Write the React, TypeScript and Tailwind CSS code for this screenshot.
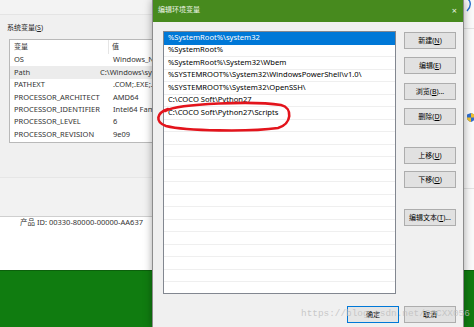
import React from 'react';

const ui = "font-['Noto_Sans','Noto_Sans_CJK_SC',sans-serif]";

const sysVars = [
  ['OS', 'Windows_NT'],
  ['Path', 'C:\\Windows\\system32'],
  ['PATHEXT', '.COM;.EXE;.BAT'],
  ['PROCESSOR_ARCHITECT', 'AMD64'],
  ['PROCESSOR_IDENTIFIER', 'Intel64 Family 6'],
  ['PROCESSOR_LEVEL', '6'],
  ['PROCESSOR_REVISION', '9e09'],
];

const paths = [
  '%SystemRoot%\\system32',
  '%SystemRoot%',
  '%SystemRoot%\\System32\\Wbem',
  '%SYSTEMROOT%\\System32\\WindowsPowerShell\\v1.0\\',
  '%SYSTEMROOT%\\System32\\OpenSSH\\',
  'C:\\COCO Soft\\Python27',
  'C:\\COCO Soft\\Python27\\Scripts',
];

function Btn({ label, hot, rest = '', focus = false, className = '' }: { label: string; hot: string; rest?: string; focus?: boolean; className?: string }) {
  return (
    <div
      className={`h-[17px] w-[52px] flex items-center justify-center border text-[7px] leading-none text-black ${
        focus ? 'border-[#0078d7] bg-[#e5e5e5]' : 'border-[#adadad] bg-[#e1e1e1]'
      } ${className}`}
    >
      {label}
      {hot && (
        <>
          (<span className="underline">{hot}</span>)
        </>
      )}
      {rest}
    </div>
  );
}

export default function App() {
  const empty = Array.from({ length: 14 });

  return (
    <div className={`relative w-[474px] h-[327px] overflow-hidden flex bg-white ${ui}`}>
      {/* environment variables window (behind) */}
      <div className="w-[152px] shrink-0 flex flex-col overflow-hidden">
        <div className="h-[217px] bg-[#f0f0f0] border-b border-[#cfcfcf] flex flex-col">
          <div className="h-[15px] border-b border-[#e4e4e4] bg-[#f3f3f3]" />
          <div className="pl-[7px] pt-[9px] text-[7px] leading-none text-[#222]">
            系统变量(<span className="underline">S</span>)
          </div>
          <div className="ml-[9px] mt-[8px] w-[170px] h-[104px] bg-white border border-[#b9b9b9] flex flex-col">
            <div className="h-[14px] flex items-center text-[7px] text-[#333]">
              <div className="w-[99px] pl-[4px] border-r border-[#e5e5e5] h-full flex items-center">变量</div>
              <div className="pl-[3px]">值</div>
            </div>
            {sysVars.map(([k, v]) => (
              <div
                key={k}
                className={`h-[12.4px] flex items-center text-[7.5px] leading-none text-[#333] ${k === 'Path' ? 'bg-[#ececec]' : ''}`}
              >
                <div className="w-[99px] pl-[4px] whitespace-nowrap overflow-hidden">{k}</div>
                <div className="pl-[4px] whitespace-nowrap">{v}</div>
              </div>
            ))}
          </div>
          <div className="flex-1" />
          <div className="h-[39px] border-t border-[#e6e6e6] bg-[#f2f2f2]" />
        </div>
        <div className="h-[53px] bg-white pl-[20px] pt-[2px] text-[7.5px] leading-none text-[#333] whitespace-nowrap">
          产品 ID: 00330-80000-00000-AA637
        </div>
        <div className="flex-1 bg-[#107c10] border-t border-[#0c600c]" />
      </div>

      {/* edit dialog */}
      <div className="relative z-10 w-[312px] shrink-0 flex flex-col border-x border-[#8c8c8c] bg-[#f0f0f0] shadow-[0_0_8px_rgba(0,0,0,0.35)]">
        <div className="h-[22px] bg-[#478a1e] flex items-center justify-between pl-[5px] pr-[6px]">
          <span className="text-[7px] leading-none text-[#eef5e8] -mt-[3px]">编辑环境变量</span>
          <span className="text-[9px] leading-none text-[#e8f2e0] -mt-[1px]">×</span>
        </div>
        <div className="flex gap-[8px] pl-[10px] pr-[7px] pt-[9px]">
          <div className="w-[233px] h-[263px] bg-white border border-[#828790] overflow-hidden">
            {paths.map((p, i) => (
              <div
                key={p}
                className={`h-[12.5px] flex items-center pl-[4px] text-[7.6px] leading-none whitespace-nowrap border-b ${
                  i === 0 ? 'bg-[#0078d7] text-white border-[#0078d7]' : 'text-black border-[#efefef]'
                }`}
              >
                {p}
              </div>
            ))}
            {empty.map((_, i) => (
              <div key={i} className="h-[12.5px] border-b border-[#efefef]" />
            ))}
          </div>
          <div className="w-[52px] flex flex-col pt-[1px]">
            <Btn label="新建" hot="N" />
            <Btn label="编辑" hot="E" className="mt-[8px]" />
            <Btn label="浏览" hot="B" rest="..." className="mt-[9px]" />
            <Btn label="删除" hot="D" className="mt-[8px]" />
            <Btn label="上移" hot="U" className="mt-[22px]" />
            <Btn label="下移" hot="O" className="mt-[7px]" />
            <Btn label="编辑文本" hot="T" rest="..." className="mt-[21px]" />
          </div>
        </div>
        <div className="flex justify-end gap-[5px] pr-[7px] mt-[12px]">
          <Btn label="确定" hot="" focus className="w-[51px]" />
          <Btn label="取消" hot="" />
        </div>
      </div>

      {/* strip of the window on the right */}
      <div className="w-[10px] shrink-0 flex flex-col">
        <div className="h-[270px] bg-[#fafafa] flex flex-col">
          <div className="h-[29px] border-b border-[#e2e2e2] relative">
            <svg width="10" height="14" viewBox="0 0 10 14" className="absolute left-0 top-0">
              <path d="M2 -2 C7 0, 8 6, 3 11" fill="none" stroke="#2a6fd1" strokeWidth="1.4" />
            </svg>
          </div>
          <div className="h-[160px] border-b border-[#e2e2e2] relative">
            <svg width="8" height="9" viewBox="0 0 8 9" className="absolute left-[3px] top-[84px]">
              <path d="M4 0 L8 1.5 L8 5 C8 7, 6 8.5, 4 9 C2 8.5, 0 7, 0 5 L0 1.5 Z" fill="#2f6fd0" />
              <path d="M4 0 L8 1.5 L8 4.5 L4 4.5 Z" fill="#f2c12e" />
              <path d="M0 4.5 L4 4.5 L4 9 C2 8.5, 0 7, 0 5 Z" fill="#f2c12e" />
            </svg>
          </div>
        </div>
        <div className="flex-1 bg-[#107c10] border-t border-[#0c600c]" />
      </div>

      {/* red hand-drawn mark */}
      <svg className="absolute left-0 top-0 z-20 pointer-events-none" width="474" height="327" viewBox="0 0 474 327">
        <path
          d="M165 111 C180 103, 255 101, 281 105 C293 108, 292 124, 278 128 C250 132, 186 131, 166 126 C155 122, 156 113, 168 109"
          fill="none"
          stroke="#e3141c"
          strokeWidth="2.6"
          strokeLinecap="round"
        />
      </svg>

      {/* watermark */}
      <div className="absolute left-[301px] top-[309px] z-20 pointer-events-none text-[9.4px] leading-none text-[#bdbdbd]/80 whitespace-nowrap font-['Liberation_Mono',monospace]">
        https://blog.csdn.net/COCXX056
      </div>
    </div>
  );
}
